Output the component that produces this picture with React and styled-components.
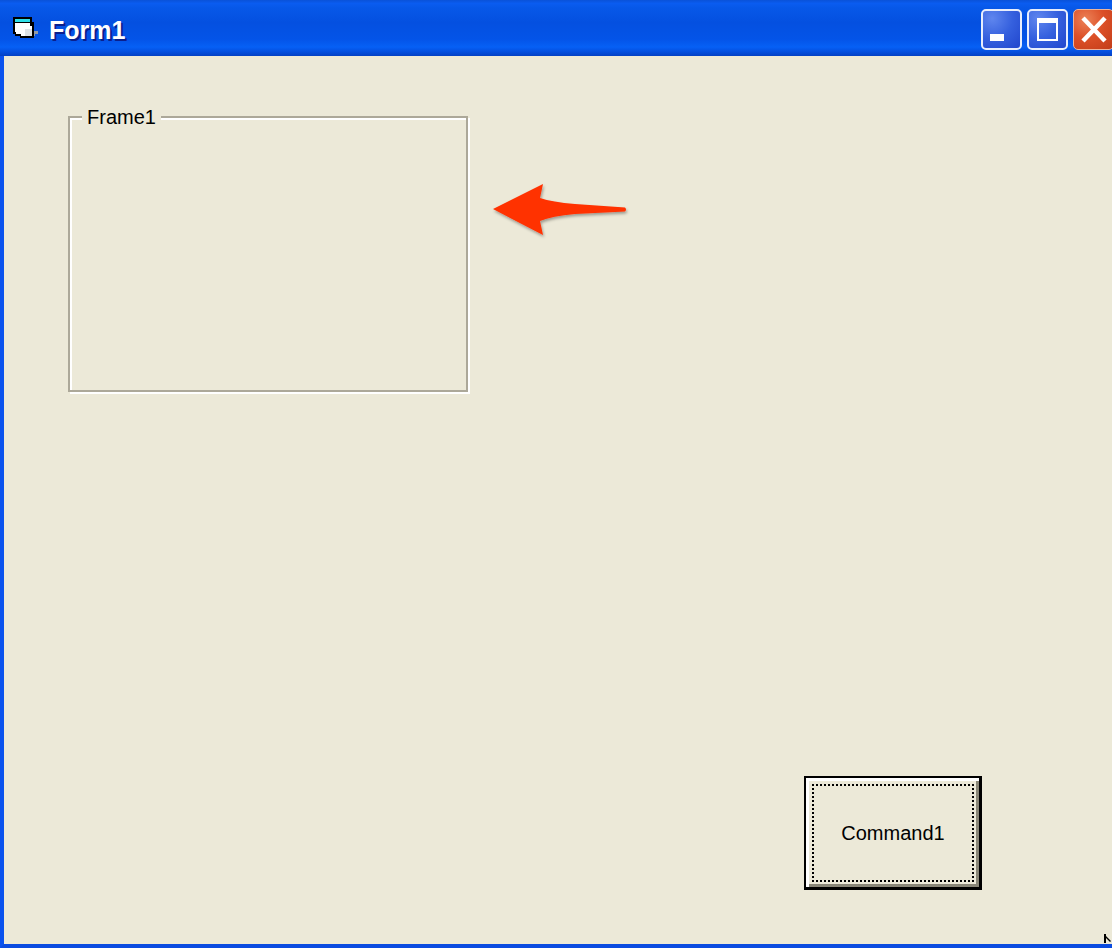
import styled, { createGlobalStyle } from "styled-components"

const GlobalStyle = createGlobalStyle`
  html, body {
    margin: 0;
    padding: 0;
    background: #ece9d8;
  }
`

const Window = styled.div`
  position: relative;
  width: 1112px;
  height: 948px;
  display: flex;
  flex-direction: column;
  overflow: hidden;
  font-family: "Liberation Sans", Arial, sans-serif;
`
const TitleBar = styled.div`
  height: 56px;
  box-sizing: border-box;
  flex: none;
  display: flex;
  align-items: center;
  padding: 4px 0 1px 12px;
  background: linear-gradient(
    180deg,
    #0a52d8 0%,
    #0a5cf0 6%,
    #0758e8 14%,
    #0450e0 40%,
    #0454e8 70%,
    #0660f5 84%,
    #0450e0 92%,
    #0340c4 100%
  );
`
const AppIcon = styled.svg`
  width: 26px;
  height: 26px;
  flex: none;
  margin-top: -1px;
`
const Title = styled.div`
  margin-left: 11px;
  font-size: 25px;
  font-weight: 700;
  color: #fff;
  text-shadow: 2px 2px 0 #0a1f8c;
  flex: 1;
  line-height: 28px;
`
const Controls = styled.div`
  display: flex;
  gap: 5px;
  margin-right: -2px;
  margin-top: -1px;
`
const ControlButton = styled.div`
  width: 41px;
  height: 41px;
  box-sizing: border-box;
  border-radius: 5px;
  border: ${(p) => (p.$close ? "1px solid #ecb49c" : "2px solid #e8eefc")};
  background: ${(p) =>
    p.$close
      ? "radial-gradient(circle at 30% 25%, #ec8258 0%, #dc5028 45%, #c23c18 100%)"
      : "radial-gradient(circle at 25% 20%, #5f86ee 0%, #3560de 50%, #2146cd 100%)"};
  display: flex;
  align-items: center;
  justify-content: center;
`
const ControlGlyph = styled.svg`
  width: 37px;
  height: 37px;
  display: block;
  flex: none;
`
const Body = styled.div`
  flex: 1;
  background: #ece9d8;
  border-left: 4px solid #0a52ee;
  border-bottom: 4px solid #0a4be0;
  padding: 60px 130px 54px 64px;
  display: flex;
  flex-direction: column;
  justify-content: space-between;
`
const TopRow = styled.div`
  display: flex;
  align-items: flex-start;
`
const Frame = styled.fieldset`
  width: 400px;
  height: 276px;
  box-sizing: border-box;
  margin: 0;
  padding: 0;
  position: relative;
  border: 2px solid #aca899;
  box-shadow: 2px 2px 0 #fff, inset 2px 2px 0 #fff;
`
const FrameLabel = styled.div`
  position: absolute;
  top: -13px;
  left: 12px;
  padding: 0 5px;
  background: #ece9d8;
  font-size: 20px;
  line-height: 24px;
  color: #000;
`
const Arrow = styled.svg`
  width: 140px;
  height: 60px;
  margin: 63px 0 0 22px;
  flex: none;
  overflow: visible;
`
const BottomRow = styled.div`
  display: flex;
  justify-content: flex-end;
`
const CommandButton = styled.div`
  width: 178px;
  height: 114px;
  box-sizing: border-box;
  border: solid #000;
  border-width: 2px 3px 3px 2px;
  padding: 6px 5px 5px 6px;
  background: #ece9d8;
  box-shadow: inset 3px 3px 0 #fff, inset -3px -3px 0 #8a8778;
  display: flex;
`
const FocusRing = styled.div`
  flex: 1;
  display: flex;
  align-items: center;
  justify-content: center;
  font-size: 20px;
  color: #000;
  background-image:
    repeating-linear-gradient(90deg, #000 0 2px, transparent 2px 4px),
    repeating-linear-gradient(90deg, #000 0 2px, transparent 2px 4px),
    repeating-linear-gradient(0deg, #000 0 2px, transparent 2px 4px),
    repeating-linear-gradient(0deg, #000 0 2px, transparent 2px 4px);
  background-size: 100% 2px, 100% 2px, 2px 100%, 2px 100%;
  background-position: top, bottom, left, right;
  background-repeat: no-repeat;
`
const Cursor = styled.svg`
  position: absolute;
  right: 0;
  bottom: 3px;
  width: 8px;
  height: 11px;
`

const App = () => {
  return (
    <>
      <GlobalStyle />
      <Window>
        <TitleBar>
          <AppIcon viewBox="0 0 26 26">
            <path d="M21 15h5v3h-3v2h-2z" fill="#8f9aa8" />
            <path d="M1 1h19v5h2v16H8v-2H3v-2H1z" fill="#000" />
            <path d="M3 3h15v3H3z" fill="#2fe0e8" />
            <path d="M3 7h15v3h2v10H9v-2H4v-2H3z" fill="#fff" />
            <path d="M13 13h7v7h-7z" fill="#dfe3e6" />
          </AppIcon>
          <Title>Form1</Title>
          <Controls>
            <ControlButton>
              <ControlGlyph viewBox="0 0 37 37">
                <rect x="7" y="23" width="14" height="7" fill="#fff" />
              </ControlGlyph>
            </ControlButton>
            <ControlButton>
              <ControlGlyph viewBox="0 0 37 37">
                <path d="M9 8h19v21H9z" fill="none" stroke="#fff" strokeWidth="2" />
                <rect x="8" y="7" width="21" height="5" fill="#fff" />
              </ControlGlyph>
            </ControlButton>
            <ControlButton $close>
              <ControlGlyph viewBox="0 0 37 37">
                <path d="M8 7l22 23M30 7L8 30" stroke="#fff" strokeWidth="4.5" fill="none" />
              </ControlGlyph>
            </ControlButton>
          </Controls>
        </TitleBar>
        <Body>
          <TopRow>
            <Frame>
              <FrameLabel>Frame1</FrameLabel>
            </Frame>
            <Arrow viewBox="0 0 140 60">
              <defs>
                <filter id="arrowShadow" x="-10%" y="-20%" width="125%" height="150%">
                  <feDropShadow dx="1" dy="2" stdDeviation="1.5" floodColor="#000" floodOpacity="0.35" />
                </filter>
              </defs>
              <path
                d="M3 30 L53 5 L50 19 Q62 23 85 25 L135 28.5 Q137 30.5 135 32.5 L85 35 Q62 37 50 42 L53 56 Z"
                fill="#ff3000"
                filter="url(#arrowShadow)"
              />
            </Arrow>
          </TopRow>
          <BottomRow>
            <CommandButton>
              <FocusRing>Command1</FocusRing>
            </CommandButton>
          </BottomRow>
        </Body>
        <Cursor viewBox="0 0 8 11">
          <path d="M0 0h2v9H0z M2 2l5 5-1 1-4-4z" fill="#000" />
        </Cursor>
      </Window>
    </>
  )
}

export default App
